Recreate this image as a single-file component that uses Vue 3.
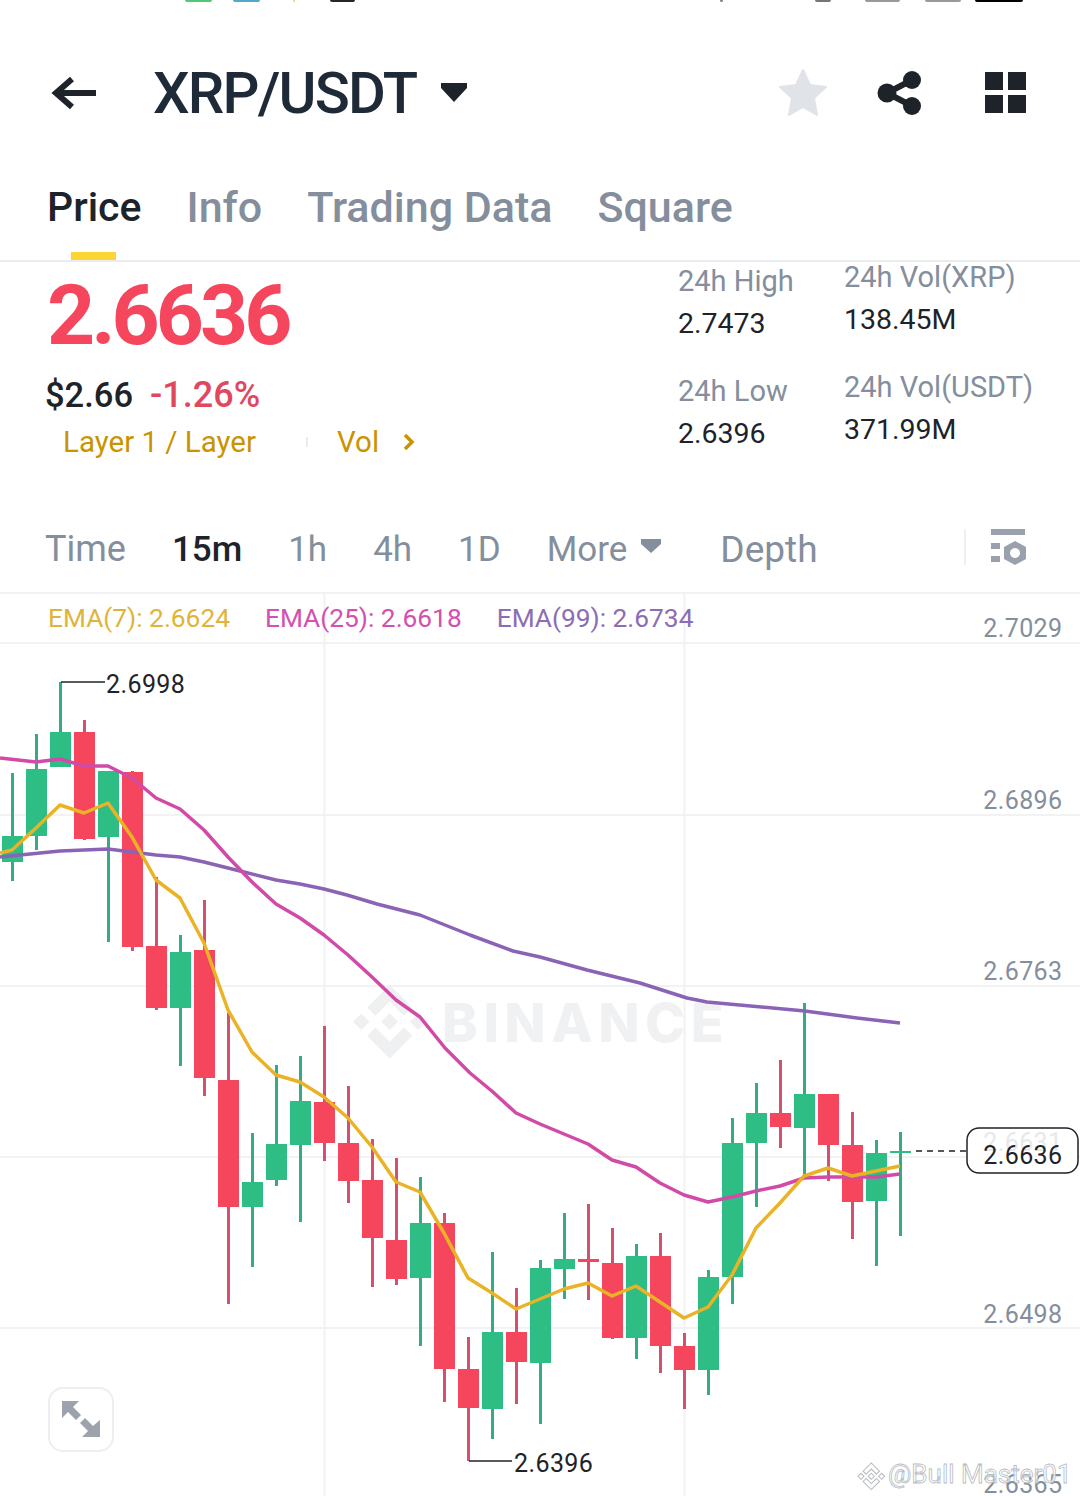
<template>
  <div class="page">
    <div class="status">
      <i class="st st-green"></i>
      <i class="st st-blue"></i>
      <i class="st st-tick"></i>
      <i class="st st-dark"></i>
      <i class="st st-r1"></i>
      <i class="st st-r2"></i>
      <i class="st st-r3"></i>
      <i class="st st-r4"></i>
      <i class="st st-batt"></i>
    </div>

    <header class="topbar">
      <svg class="back" width="46" height="34" viewBox="0 0 46 34">
        <path d="M22 3 6 17l16 14M6 17h40" fill="none" stroke="#1e2329" stroke-width="6" stroke-linejoin="miter" />
      </svg>
      <h1 class="pair">XRP/USDT</h1>
      <svg class="caret" width="28" height="20" viewBox="0 0 28 20"><path d="M1 1h26v5L14 20 1 6z" fill="#1e2329" /></svg>
      <svg class="star" width="48" height="48" viewBox="0 0 48 48">
        <path d="M24 1l7 15 16 2-12 11 3 17-14-8-14 8 3-17L1 18l16-2z" fill="#e0e3e7" stroke="#e0e3e7" stroke-width="2" stroke-linejoin="round" />
      </svg>
      <svg class="share" width="44" height="46" viewBox="0 0 44 46">
        <g fill="#1e2329"><circle cx="35" cy="10" r="9" /><circle cx="10" cy="23" r="9.5" /><circle cx="35" cy="36" r="9" /></g>
        <path d="M35 10 10 23l25 13" fill="none" stroke="#1e2329" stroke-width="6" />
      </svg>
      <div class="grid-icon"><i></i><i></i><i></i><i></i></div>
    </header>

    <nav class="tabs">
      <span v-for="tab in tabs" :key="tab" class="tab" :class="{ active: tab === 'Price' }">{{ tab }}</span>
    </nav>

    <section class="stats">
      <div class="summary">
        <div class="last">2.6636</div>
        <div class="fiat"><span>$2.66</span><span class="pct">-1.26%</span></div>
        <div class="tags">
          <span>Layer 1 / Layer</span>
          <i class="tag-sep"></i>
          <span>Vol</span>
          <svg class="chev" width="12" height="18" viewBox="0 0 12 18"><path d="M2 2l7 7-7 7" fill="none" stroke="#c99400" stroke-width="3.500" /></svg>
        </div>
      </div>
      <div class="col col-a">
        <div class="label">24h High</div>
        <div class="value">2.7473</div>
        <div class="label next">24h Low</div>
        <div class="value">2.6396</div>
      </div>
      <div class="col col-b">
        <div class="label">24h Vol(XRP)</div>
        <div class="value">138.45M</div>
        <div class="label next">24h Vol(USDT)</div>
        <div class="value">371.99M</div>
      </div>
    </section>

    <div class="intervals">
      <span class="time">Time</span>
      <span class="on">15m</span>
      <span>1h</span>
      <span>4h</span>
      <span>1D</span>
      <span class="more">More<svg width="20" height="14" viewBox="0 0 20 14"><path d="M0 0h20v5l-10 9L0 5z" fill="#848e9c" /></svg></span>
      <span class="depth">Depth</span>
      <i class="int-sep"></i>
      <svg class="settings" width="36" height="36" viewBox="0 0 36 36">
        <g fill="#9aa1ad">
          <rect x="1" y="0" width="34" height="6" />
          <rect x="1" y="14" width="9" height="6" />
          <rect x="1" y="27" width="9" height="6" />
          <path fill-rule="evenodd" d="M25 12l11 6v12l-11 6-11-6V18zm0 7a5 5 0 1 0 .01 0z" />
        </g>
      </svg>
    </div>

    <div class="chart">
      <svg class="plot" width="1080" height="902" viewBox="0 594 1080 902">
        <g stroke="#f1f2f4" stroke-width="2">
          <line v-for="y in gridY" :key="y" x1="0" x2="1080" :y1="y" :y2="y" />
          <line x1="324.500" x2="324.500" y1="594" y2="1496" />
          <line x1="684.500" x2="684.500" y1="594" y2="1496" />
        </g>

        <path :d="logo" transform="translate(353 985) scale(0.58)" fill="#eff0f1" />
        <text x="442" y="1042" class="mark">BINANCE</text>

        <g v-for="c in candles" :key="c.x">
          <rect :x="c.x - 1" :y="c.high" width="3" :height="c.low - c.high" :fill="c.wick" />
          <rect :x="c.x - 10" :y="c.top" width="21" :height="c.bottom - c.top" :fill="c.body" />
        </g>

        <polyline :points="ema99" class="ema" stroke="#8a63b5" />
        <polyline :points="ema25" class="ema" stroke="#d24aa8" />
        <polyline :points="ema7" class="ema" stroke="#e9b325" />

        <path d="M61 682H105" stroke="#1e2329" stroke-width="1.500" fill="none" />
        <text x="106" y="693" class="extreme">2.6998</text>
        <path d="M469 1461H512" stroke="#1e2329" stroke-width="1.500" fill="none" />
        <text x="514" y="1472" class="extreme">2.6396</text>

        <text v-for="t in axis" :key="t.label" x="1062.500" :y="t.y" text-anchor="end" class="tick">{{ t.label }}</text>

        <path d="M916 1151H966" stroke="#1e2329" stroke-width="1.500" stroke-dasharray="6 5" fill="none" />
        <rect x="967" y="1128" width="111" height="45" rx="12" fill="#fff" stroke="#1e2329" stroke-width="1.500" />
        <text x="1062.500" y="1151" text-anchor="end" class="tick faint">2.6631</text>
        <text x="1062.500" y="1164" text-anchor="end" class="tick now">2.6636</text>

        <path :d="logo" transform="translate(858 1463) scale(0.21)" fill="#fff" stroke="#b8bcc2" stroke-width="5" />
        <text x="888" y="1483" class="credit">@Bull Master01</text>
      </svg>

      <div class="legend">
        <span class="ma7">EMA(7): 2.6624</span>
        <span class="ma25">EMA(25): 2.6618</span>
        <span class="ma99">EMA(99): 2.6734</span>
      </div>

      <button class="expand">
        <svg width="38" height="38" viewBox="0 0 38 38">
          <path d="M0 0h17L11 6l8 8-5 5-8-8-6 6zM38 36H20l6-6-8-8 5-5 8 8 7-6z" fill="#9ca3ad" />
        </svg>
      </button>
    </div>
  </div>
</template>

<script setup>
const tabs = ['Price', 'Info', 'Trading Data', 'Square']

const gridY = [643, 815, 986, 1157, 1328]

const axis = [
  { label: '2.7029', y: 637 },
  { label: '2.6896', y: 809 },
  { label: '2.6763', y: 980 },
  { label: '2.6498', y: 1323 },
  { label: '2.6365', y: 1493 },
]

const logo =
  'M38.73 53.2l24.59-24.58 24.6 24.6 14.3-14.31L63.32 0 24.43 38.9zM0 63.31l14.3-14.31 14.31 14.31-14.31 14.3zM38.73 73.41l24.59 24.59 24.6-24.6 14.31 14.29-38.9 38.91-38.91-38.88zM98 63.31l14.3-14.31 14.31 14.3-14.31 14.32zM77.83 63.3L63.32 48.78 48.81 63.28l14.51 14.5z'

// g/r, high, low, body top, body bottom
const raw = [
  ['g', 773, 881, 836, 862],
  ['g', 734, 850, 769, 836],
  ['g', 682, 767, 732, 767],
  ['r', 720, 840, 732, 839],
  ['g', 771, 942, 771, 837],
  ['r', 771, 951, 772, 947],
  ['r', 877, 1010, 946, 1008],
  ['g', 935, 1066, 952, 1008],
  ['r', 900, 1096, 950, 1078],
  ['r', 1013, 1304, 1080, 1207],
  ['g', 1133, 1267, 1182, 1207],
  ['g', 1065, 1186, 1144, 1180],
  ['g', 1056, 1222, 1101, 1145],
  ['r', 1026, 1161, 1102, 1143],
  ['r', 1086, 1203, 1143, 1181],
  ['r', 1139, 1287, 1180, 1238],
  ['r', 1158, 1285, 1240, 1279],
  ['g', 1177, 1346, 1223, 1278],
  ['r', 1213, 1402, 1223, 1369],
  ['r', 1337, 1461, 1369, 1408],
  ['g', 1252, 1439, 1332, 1409],
  ['r', 1288, 1404, 1332, 1362],
  ['g', 1260, 1424, 1268, 1363],
  ['g', 1213, 1299, 1259, 1269],
  ['r', 1204, 1300, 1259, 1262],
  ['r', 1228, 1339, 1263, 1338],
  ['g', 1244, 1359, 1256, 1338],
  ['r', 1233, 1373, 1256, 1346],
  ['r', 1333, 1409, 1346, 1370],
  ['g', 1270, 1395, 1277, 1370],
  ['g', 1118, 1304, 1143, 1277],
  ['g', 1083, 1207, 1113, 1143],
  ['r', 1060, 1148, 1113, 1127],
  ['g', 1003, 1178, 1094, 1128],
  ['r', 1094, 1181, 1094, 1145],
  ['r', 1112, 1239, 1145, 1202],
  ['g', 1140, 1266, 1153, 1201],
  ['g', 1132, 1236, 1151, 1153],
]

const candles = raw.map(([side, high, low, top, bottom], i) => ({
  x: 12 + 24 * i,
  high,
  low,
  top,
  bottom,
  body: side === 'g' ? '#2ebd85' : '#f6465d',
  wick: side === 'g' ? '#35ab84' : '#d5506c',
}))

const ema7 =
  '0,853 12,850 36,828 60,805 84,813 108,803 132,837 156,880 180,898 204,943 228,1010 252,1052 276,1075 300,1082 324,1097 348,1118 372,1147 396,1182 420,1192 444,1233 468,1278 492,1293 516,1309 540,1299 564,1289 588,1283 612,1296 636,1286 660,1302 684,1318 708,1307 732,1275 756,1228 780,1203 804,1176 828,1168 852,1176 876,1171 900,1166'

const ema25 =
  '0,758 36,762 60,759 84,766 108,766 132,778 156,798 180,809 204,830 228,857 252,882 276,904 300,918 324,935 348,955 372,977 396,1000 420,1017 445,1048 470,1073 493,1092 516,1113 540,1124 564,1134 588,1144 612,1160 636,1167 660,1183 684,1195 708,1202 732,1197 756,1191 780,1186 804,1178 828,1177 852,1177 876,1177 900,1174'

const ema99 =
  '0,857 60,851 108,849 132,852 156,855 180,857 204,862 240,871 276,880 300,884 324,889 347,895 377,904 420,915 470,935 513,951 540,957 587,970 640,983 687,998 707,1002 805,1011 857,1018 900,1023'
</script>

<style>
html,
body {
  margin: 0;
  background: #fff;
}
</style>

<style scoped>
.page {
  width: 1080px;
  height: 1496px;
  overflow: hidden;
  background: #fff;
  color: #1e2329;
  font-family: Roboto, "Noto Sans", sans-serif;
}

.status {
  position: relative;
  height: 3px;
  overflow: hidden;
}

.st {
  position: absolute;
  top: 0;
  height: 2px;
  border-radius: 0 0 4px 4px;
}

.st-green { left: 185px; width: 27px; background: #4fc878; }
.st-blue { left: 233px; width: 27px; background: #4fa9c8; }
.st-tick { left: 293px; width: 2px; background: #e6d58c; }
.st-dark { left: 330px; width: 25px; background: #23262b; }
.st-r1 { left: 720px; width: 3px; background: #888; }
.st-r2 { left: 815px; width: 16px; background: #777; }
.st-r3 { left: 865px; width: 35px; background: #999; }
.st-r4 { left: 925px; width: 36px; background: #999; }
.st-batt { left: 975px; width: 48px; background: #000; }

.topbar {
  display: flex;
  align-items: center;
  height: 180px;
  padding-left: 50px;
}

.back {
  margin-right: 57px;
}

.pair {
  margin: 0;
  font-size: 58px;
  font-weight: 500;
  letter-spacing: -1.8px;
  line-height: 60px;
  color: #1e2a38;
}

.caret {
  margin: 0 0 0 24px;
  position: relative;
  top: -1px;
}

.star {
  margin-left: auto;
}

.share {
  margin-left: 50px;
}

.grid-icon {
  display: grid;
  grid-template-columns: 18px 18px;
  grid-auto-rows: 18px;
  gap: 5px;
  margin: -2px 54px 0 64px;
}

.grid-icon i {
  background: #1e2329;
}

.tabs {
  display: flex;
  gap: 45px;
  height: 77px;
  padding-left: 47px;
  border-bottom: 2px solid #eaecef;
}

.tab {
  position: relative;
  height: 77px;
  font-size: 43px;
  line-height: 48px;
  font-weight: 500;
  color: #848e9c;
}

.tab.active {
  font-size: 41px;
  color: #1e2329;
}

.tab.active::after {
  content: "";
  position: absolute;
  left: 24px;
  bottom: 0;
  width: 45px;
  height: 8px;
  background: #fcd535;
}

.stats {
  display: flex;
  height: 260px;
}

.summary {
  flex: 0 0 633px;
  padding-left: 45px;
}

.last {
  margin: 12px 0 0 2px;
  font-size: 84px;
  letter-spacing: -4px;
  line-height: 84px;
  font-weight: 700;
  color: #f6465d;
}

.fiat {
  display: flex;
  gap: 17px;
  margin-top: 15px;
  font-size: 34.500px;
  line-height: 44px;
  font-weight: 500;
}

.pct {
  font-size: 36px;
  color: #e0485f;
}

.tags {
  display: flex;
  align-items: center;
  margin: 5px 0 0 18px;
  font-size: 29.500px;
  line-height: 40px;
  color: #c99400;
}

.tag-sep {
  width: 2px;
  height: 10px;
  margin: 0 29px 0 50px;
  background: #eaecef;
}

.chev {
  margin-left: 24px;
}

.col {
  font-size: 29px;
}

.col-a {
  flex: 0 0 166px;
}

.col-b {
  margin-top: -4px;
}

.label {
  line-height: 38px;
  color: #848e9c;
}

.label.next {
  margin-top: 24px;
}

.value {
  font-size: 28.500px;
  line-height: 48px;
  color: #1e2329;
}

.intervals {
  display: flex;
  align-items: center;
  gap: 46px;
  height: 54px;
  padding: 0 0 16px 45px;
  border-bottom: 2px solid #f1f2f4;
  font-size: 35px;
  color: #848e9c;
}

.time {
  font-size: 36px;
}

.on {
  font-weight: 500;
  color: #1e2329;
}

.more {
  display: flex;
  align-items: center;
  gap: 14px;
}

.more svg {
  margin-bottom: 7px;
}

.depth {
  margin-left: 13px;
  font-size: 37px;
}

.int-sep {
  width: 2px;
  height: 36px;
  margin: -5px 0 0 auto;
  background: #eeeff1;
}

.settings {
  margin: -4px 54px 0 -22px;
}

.chart {
  position: relative;
  height: 902px;
}

.plot {
  position: absolute;
  inset: 0;
}

.legend {
  position: relative;
  display: flex;
  gap: 35px;
  padding: 6px 0 0 48px;
  font-size: 26.300px;
  line-height: 36px;
}

.ma7 { color: #dfb43a; }
.ma25 { color: #d44fb0; }
.ma99 { color: #8d6cb5; }

.expand {
  position: absolute;
  left: 48px;
  top: 793px;
  width: 66px;
  height: 65px;
  padding: 0;
  display: flex;
  align-items: center;
  justify-content: center;
  background: #fff;
  border: 2px solid #eceef0;
  border-radius: 15px;
}

.ema {
  fill: none;
  stroke-width: 3.500;
  stroke-linejoin: round;
}

.mark {
  font-family: Inter, Roboto, sans-serif;
  font-size: 54px;
  font-weight: 800;
  letter-spacing: 5.500px;
  fill: #f0f1f2;
}

.extreme {
  font-size: 25px;
  letter-spacing: 0.400px;
  fill: #1e2329;
}

.tick {
  font-size: 25px;
  letter-spacing: 0.400px;
  fill: #848e9c;
}

.tick.faint {
  fill: #e6e8ea;
}

.tick.now {
  fill: #1e2329;
}

.credit {
  font-size: 26px;
  fill: rgba(255, 255, 255, 0.7);
  stroke: #b8bcc2;
  stroke-width: 0.8px;
}
</style>
